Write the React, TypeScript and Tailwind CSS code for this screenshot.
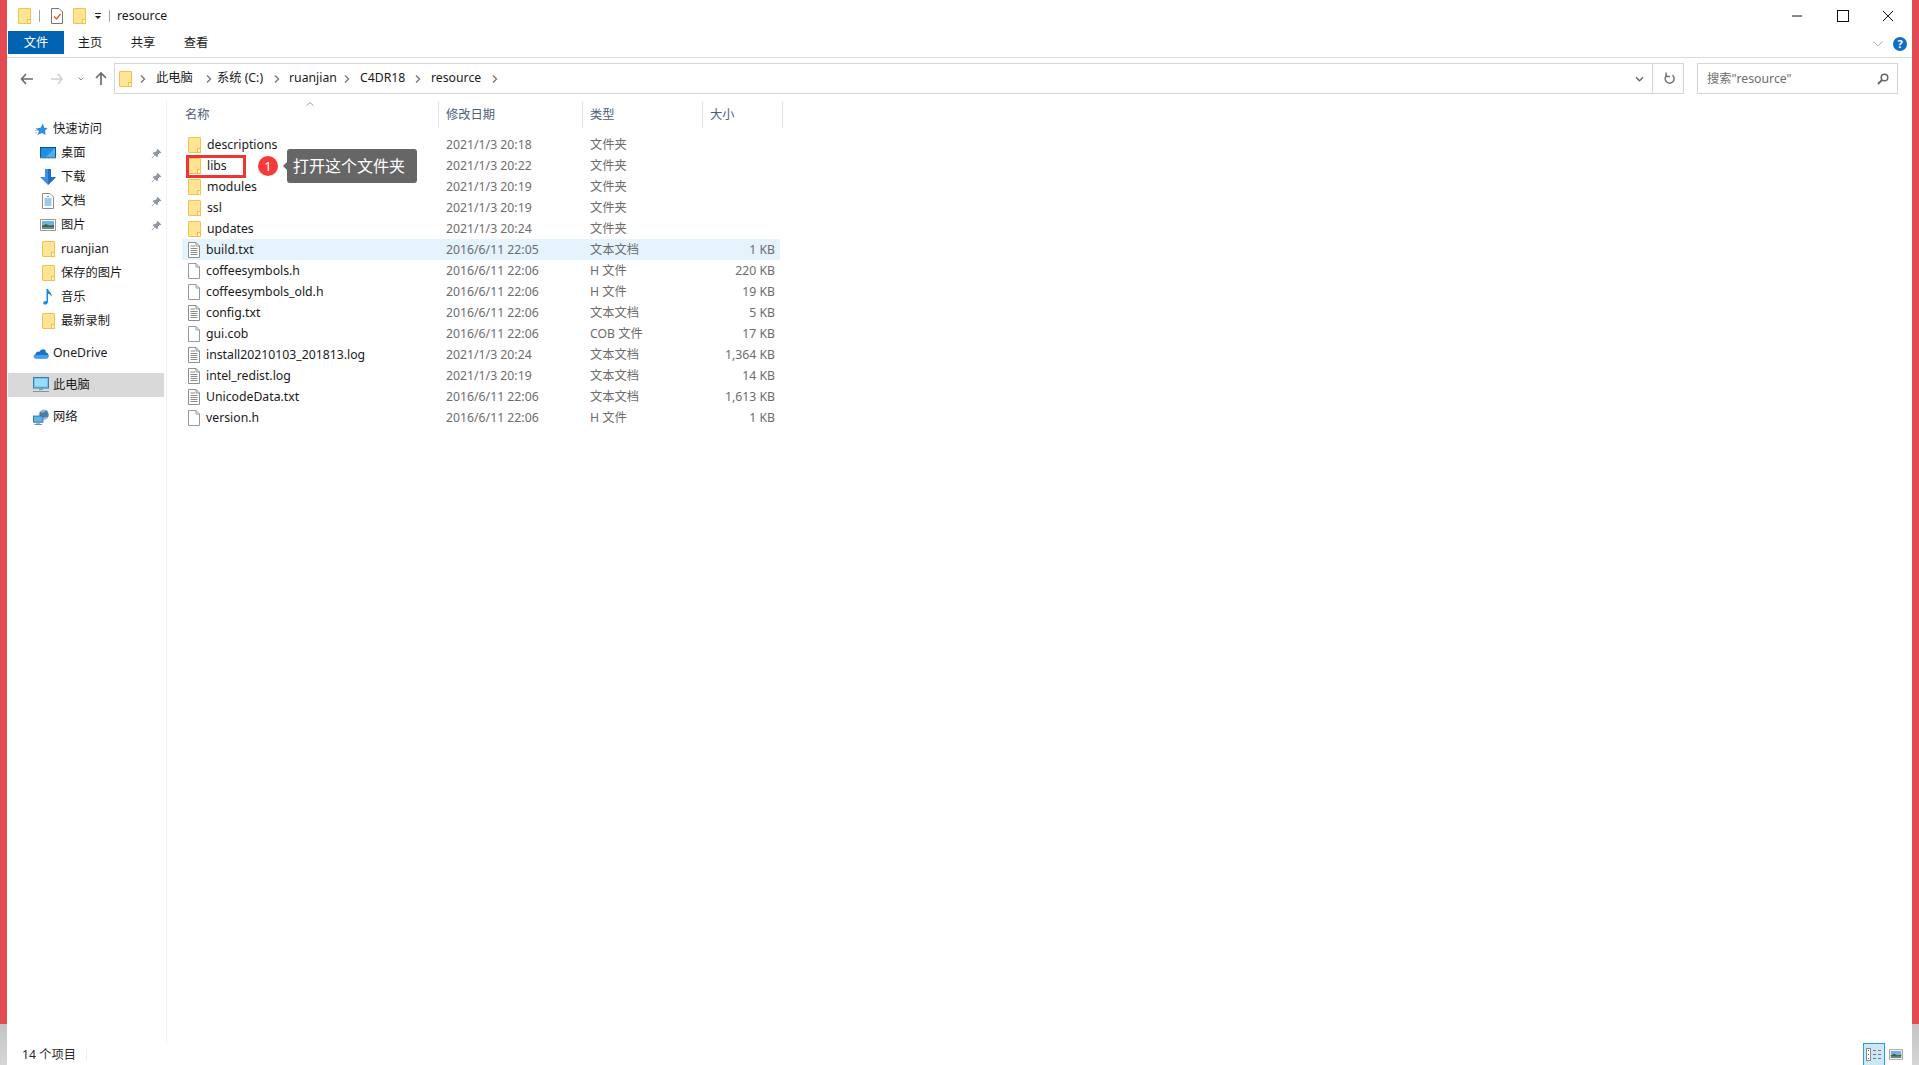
import React from "react";

const FONT = "font-['Noto_Sans','Noto_Sans_CJK_SC',sans-serif]";

function Folder({ className = "" }: { className?: string }) {
  return (
    <svg viewBox="0 0 13 16" className={`w-[13px] h-[16px] shrink-0 ${className}`}>
      <rect x="0.5" y="0.5" width="12" height="15" rx="0.5" fill="#ffe593" stroke="#ecc54f" />
      <rect x="9.5" y="11.5" width="3" height="4" fill="#fff3c4" stroke="#ecc54f" />
    </svg>
  );
}

function DocLines() {
  return (
    <svg viewBox="0 0 12 16" className="w-[12px] h-[16px] shrink-0">
      <path d="M.5.5H8L11.500 4V15.500H.5Z" fill="#fff" stroke="#8e8e8e" />
      <path d="M8 .5V4H11.500" fill="none" stroke="#8e8e8e" />
      <path d="M2.500 4H7M2.500 6.500H9.500M2.500 8.500H9.500M2.500 10.500H9.500M2.500 12.500H9.500" stroke="#8a8a8a" />
    </svg>
  );
}

function DocBlank() {
  return (
    <svg viewBox="0 0 12 16" className="w-[12px] h-[16px] shrink-0">
      <path d="M.5.5H8L11.500 4V15.500H.5Z" fill="#fff" stroke="#9a9a9a" />
      <path d="M8 .5V4H11.500" fill="none" stroke="#9a9a9a" />
    </svg>
  );
}

function Chevron({ className = "" }: { className?: string }) {
  return (
    <svg viewBox="0 0 6 10" className={`w-[6px] h-[10px] shrink-0 ${className}`}>
      <path d="M1 1.500L4.500 5 1 8.500" fill="none" stroke="#7a7a7a" strokeWidth="1.400" />
    </svg>
  );
}

function Star() {
  return (
    <svg viewBox="0 0 14 14" className="w-[13px] h-[13px]">
      <path d="M8.500.5L10 5 13.500 5.500 10.800 8.300 11.500 13 7.500 10.800 2.500 13 4.300 8.500 0.500 5.800 6 5Z" fill="#2f8fe3" />
      <path d="M0 8H3M0 10.500H2" stroke="#9cc9f0" />
    </svg>
  );
}

function Pin() {
  return (
    <svg viewBox="0 0 12 12" className="w-[11px] h-[11px]">
      <path d="M7 .8L11.200 5 10.300 5.800 9.500 5.400 7.300 7.600 7.400 9.600 6.400 10.200 1.800 5.600 2.500 4.600 4.500 4.700 6.700 2.500 6.300 1.700Z" fill="#8c95a0" />
      <path d="M3.800 8.200L.8 11.200" stroke="#8c95a0" />
    </svg>
  );
}

function Desktop() {
  return (
    <svg viewBox="0 0 16 12" className="w-[16px] h-[12px]">
      <rect width="16" height="12" fill="#111d2c" />
      <rect x="0.500" y="0.500" width="15" height="9.500" fill="#1c8fe6" />
      <path d="M15 1L6 10H15Z" fill="#4db1f2" />
      <rect y="10.500" width="16" height="1.500" fill="#a9d6f5" />
    </svg>
  );
}

function Download() {
  return (
    <svg viewBox="0 0 16 16" className="w-[16px] h-[16px]">
      <path d="M5 0H11V8H16L8 16 0 8H5Z" fill="#3d8fe0" />
      <path d="M8 0H11V8H16L8 16Z" fill="#1f6fc4" />
    </svg>
  );
}

function DocBlue() {
  return (
    <svg viewBox="0 0 12 16" className="w-[12px] h-[16px]">
      <path d="M.5.5H8L11.500 4V15.500H.5Z" fill="#fff" stroke="#8e8e8e" />
      <path d="M5 3.500H7M2.500 6H9.500M2.500 8H9.500M2.500 10H9.500M2.500 12H9.500" stroke="#3b93d8" />
    </svg>
  );
}

function Picture({ className = "w-[16px] h-[12px]" }: { className?: string }) {
  return (
    <svg viewBox="0 0 16 12" className={className}>
      <rect x="0.500" y="0.500" width="15" height="11" fill="#fff" stroke="#9a9a9a" />
      <rect x="2" y="2" width="12" height="4" fill="#6fb3e6" />
      <rect x="2" y="6" width="12" height="4" fill="#6a8f78" />
      <path d="M2 7L6 5 10 7 14 6V8H2Z" fill="#3f5f52" />
    </svg>
  );
}

function Music() {
  return (
    <svg viewBox="0 0 10 16" className="w-[10px] h-[16px]">
      <path d="M3.500 0H5C5.400 2.500 9.500 4 8.500 8 8 6 6.500 5 5 4.800V12.500C5 14.500 3.300 15.800 1.800 15.600 .2 15.300-.3 13.800.8 12.700 1.500 12 2.700 11.700 3.500 12Z" fill="#1789e0" />
    </svg>
  );
}

function Cloud() {
  return (
    <svg viewBox="0 0 16 11" className="w-[16px] h-[11px]">
      <path d="M3 10.500C.5 10.500 0 7 2.500 6.200 3 3.500 5.500 3 6.500 4 8 0 13 .8 13 4.500 15.800 4.800 16.500 9 14 10.500Z" fill="#1a73c9" />
      <path d="M3 10.500C1 10.500 0 8.500 1 7H15.500C16 9 15.300 10 14 10.500Z" fill="#3fa0e8" />
    </svg>
  );
}

function Computer() {
  return (
    <svg viewBox="0 0 16 16" className="w-[16px] h-[16px]">
      <rect x="0.500" y="0.500" width="15" height="10.500" fill="#6cc3f2" stroke="#3b7fa8" />
      <rect x="2" y="2" width="12" height="7.500" fill="#9bdcf9" />
      <path d="M6 11.500H10V13H6Z" fill="#7a99ad" />
      <path d="M0 14.500H16" stroke="#7a99ad" />
    </svg>
  );
}

function Network() {
  return (
    <svg viewBox="0 0 18 17" className="w-[17px] h-[16px]">
      <circle cx="11.500" cy="6" r="5.500" fill="#8fbadd" />
      <path d="M8 3C10 5 13 3 14 1 16 3 17 6 15.500 9 13 8 10 9 9 10.500 7 8 6.500 5 8 3Z" fill="#4d7fa6" />
      <rect x="0.500" y="7.500" width="10" height="6.500" fill="#5cb5ea" stroke="#3b6f98" />
      <path d="M3.500 15H7.500M1.500 16.500H9.500" stroke="#6a8ba3" />
    </svg>
  );
}

function Search() {
  return (
    <svg viewBox="0 0 12 12" className="w-[12px] h-[12px]">
      <circle cx="7.500" cy="4.500" r="3.300" fill="none" stroke="#666" strokeWidth="1.500" />
      <path d="M5 7L1 11" stroke="#666" strokeWidth="2" />
    </svg>
  );
}

function Refresh() {
  return (
    <svg viewBox="0 0 12 13" className="ml-[3px] w-[12px] h-[13px]">
      <path d="M8.500 3.200A4.500 4.500 0 1 1 3 3" fill="none" stroke="#777" strokeWidth="1.500" />
      <path d="M2 0.500V4.500H6" fill="none" stroke="#777" strokeWidth="1.500" />
    </svg>
  );
}

function HelpCircle() {
  return (
    <span className="w-[14px] h-[14px] rounded-full bg-[#0f6fc6] text-white text-[11px] font-bold leading-[14px] text-center">?</span>
  );
}

const sidebarPinned = [
  { icon: <Desktop />, label: "桌面", pin: true },
  { icon: <Download />, label: "下载", pin: true },
  { icon: <span className="ml-[2px] flex"><DocBlue /></span>, label: "文档", pin: true },
  { icon: <Picture />, label: "图片", pin: true },
  { icon: <span className="ml-[2px] flex"><Folder /></span>, label: "ruanjian", pin: false },
  { icon: <span className="ml-[2px] flex"><Folder /></span>, label: "保存的图片", pin: false },
  { icon: <span className="ml-[3px] flex"><Music /></span>, label: "音乐", pin: false },
  { icon: <span className="ml-[2px] flex"><Folder /></span>, label: "最新录制", pin: false },
];

const files = [
  { kind: "folder", name: "descriptions", date: "2021/1/3 20:18", type: "文件夹", size: "" },
  { kind: "folder", name: "libs", date: "2021/1/3 20:22", type: "文件夹", size: "" },
  { kind: "folder", name: "modules", date: "2021/1/3 20:19", type: "文件夹", size: "" },
  { kind: "folder", name: "ssl", date: "2021/1/3 20:19", type: "文件夹", size: "" },
  { kind: "folder", name: "updates", date: "2021/1/3 20:24", type: "文件夹", size: "" },
  { kind: "doc", name: "build.txt", date: "2016/6/11 22:05", type: "文本文档", size: "1 KB", selected: true },
  { kind: "blank", name: "coffeesymbols.h", date: "2016/6/11 22:06", type: "H 文件", size: "220 KB" },
  { kind: "blank", name: "coffeesymbols_old.h", date: "2016/6/11 22:06", type: "H 文件", size: "19 KB" },
  { kind: "doc", name: "config.txt", date: "2016/6/11 22:06", type: "文本文档", size: "5 KB" },
  { kind: "blank", name: "gui.cob", date: "2016/6/11 22:06", type: "COB 文件", size: "17 KB" },
  { kind: "doc", name: "install20210103_201813.log", date: "2021/1/3 20:24", type: "文本文档", size: "1,364 KB" },
  { kind: "doc", name: "intel_redist.log", date: "2021/1/3 20:19", type: "文本文档", size: "14 KB" },
  { kind: "doc", name: "UnicodeData.txt", date: "2016/6/11 22:06", type: "文本文档", size: "1,613 KB" },
  { kind: "blank", name: "version.h", date: "2016/6/11 22:06", type: "H 文件", size: "1 KB" },
];

const crumbs = [
  { t: "此电脑", c: "ml-[10px] w-[50px]" },
  { t: "系统 (C:)", c: "ml-[5px] w-[57px]" },
  { t: "ruanjian", c: "ml-[9px] w-[55px]" },
  { t: "C4DR18", c: "ml-[10px] w-[55px]" },
  { t: "resource", c: "ml-[10px] w-[61px]" },
];

function Stripe() {
  return (
    <div className="w-[7px] shrink-0 flex flex-col">
      <div className="flex-1 bg-[#e24b52]" />
      <div className="h-[41px] bg-gradient-to-b from-[#c4c4c4] to-[#d6d6d6]" />
    </div>
  );
}

function SideRow({ icon, label, pin, className = "" }: { icon: React.ReactNode; label: string; pin?: boolean; className?: string }) {
  return (
    <div className={`h-[24px] flex items-center ${className}`}>
      <span className="w-[16px] ml-[33px] flex items-center shrink-0">{icon}</span>
      <span className="ml-[5px]">{label}</span>
      {pin && <span className="ml-auto mr-[4px] flex"><Pin /></span>}
    </div>
  );
}

function SideTop({ icon, label, className = "" }: { icon: React.ReactNode; label: string; className?: string }) {
  return (
    <div className={`h-[24px] flex items-center ${className}`}>
      <span className="w-[18px] ml-[25px] flex items-center justify-center shrink-0">{icon}</span>
      <span className="ml-[3px]">{label}</span>
    </div>
  );
}

export default function App() {
  return (
    <div className={`w-[1919px] h-[1065px] overflow-hidden flex bg-white text-[12.25px] text-[#1a1a1a] ${FONT}`}>
      <Stripe />
      <div className="flex-1 min-w-0 flex flex-col">
        {/* title bar */}
        <div className="h-[31px] flex items-center pl-[11px] pr-[19px] shrink-0">
          <Folder />
          <span className="ml-[8px] w-px h-[12px] bg-[#a0a0a0]" />
          <svg viewBox="0 0 12 16" className="ml-[11px] w-[12px] h-[16px]">
            <path d="M.5.5H8L11.500 4V15.500H.5Z" fill="#fff" stroke="#777" />
            <path d="M3 8.500L5.500 11 9.500 6" fill="none" stroke="#e2592b" strokeWidth="1.400" />
          </svg>
          <Folder className="ml-[10px]" />
          <svg viewBox="0 0 8 8" className="ml-[8px] w-[8px] h-[8px]">
            <path d="M1 1.500H7" stroke="#222" />
            <path d="M1 4H7L4 7Z" fill="#222" />
          </svg>
          <span className="ml-[7px] w-px h-[12px] bg-[#a0a0a0]" />
          <span className="ml-[7px] pt-[2px]">resource</span>
          <svg viewBox="0 0 10 10" className="ml-auto w-[10px] h-[10px]">
            <path d="M0 5H10" stroke="#111" />
          </svg>
          <svg viewBox="0 0 12 12" className="ml-[35px] w-[12px] h-[12px]">
            <rect x="0.500" y="0.500" width="11" height="11" fill="none" stroke="#111" />
          </svg>
          <svg viewBox="0 0 10 10" className="ml-[34px] w-[10px] h-[10px]">
            <path d="M0 0L10 10M10 0L0 10" stroke="#111" />
          </svg>
        </div>
        {/* ribbon tabs */}
        <div className="h-[27px] shrink-0 flex items-start border-b border-[#dadada] pr-[5px] whitespace-nowrap">
          <div className="ml-px w-[56px] h-[23px] pt-[2px] bg-[#0063b1] text-white flex items-center justify-center">文件</div>
          <div className="ml-[14px] w-[24px] h-[23px] pt-[2px] flex items-center justify-center">主页</div>
          <div className="ml-[29px] w-[24px] h-[23px] pt-[2px] flex items-center justify-center">共享</div>
          <div className="ml-[29px] w-[24px] h-[23px] pt-[2px] flex items-center justify-center">查看</div>
          <div className="ml-auto h-[26px] flex items-center">
            <svg viewBox="0 0 10 6" className="w-[10px] h-[6px]">
              <path d="M.5.5L5 5 9.500.5" fill="none" stroke="#b5b5b5" />
            </svg>
            <span className="ml-[10px] flex"><HelpCircle /></span>
          </div>
        </div>
        {/* address row */}
        <div className="h-[42px] shrink-0 flex items-start pt-[5px] pl-[13px] pr-[14px]">
          <div className="h-[31px] flex items-center">
            <svg viewBox="0 0 13 12" className="w-[13px] h-[12px]">
              <path d="M6 1L1.500 6 6 11M1.500 6H13" fill="none" stroke="#6b6b6b" strokeWidth="1.600" />
            </svg>
            <svg viewBox="0 0 12 12" className="ml-[18px] w-[12px] h-[12px]">
              <path d="M7 1L11 6 7 11M11 6H0" fill="none" stroke="#cfcfcf" strokeWidth="1.500" />
            </svg>
            <svg viewBox="0 0 6 4" className="ml-[15px] w-[6px] h-[4px]">
              <path d="M.5.5L3 3 5.500.5" fill="none" stroke="#8a8a8a" />
            </svg>
            <svg viewBox="0 0 12 13" className="ml-[11px] w-[12px] h-[13px]">
              <path d="M1 6L6 1 11 6M6 1V13" fill="none" stroke="#6b6b6b" strokeWidth="1.700" />
            </svg>
          </div>
          <div className="ml-[7px] flex-1 h-[31px] border border-[#d6d6d6] flex items-center pl-[4px]">
            <Folder />
            <Chevron className="ml-[8px]" />
            {crumbs.map((c) => (
              <React.Fragment key={c.t}>
                <span className={`${c.c} whitespace-nowrap`}>{c.t}</span>
                <Chevron />
              </React.Fragment>
            ))}
            <div className="ml-auto h-full w-[31px] flex items-center justify-center pl-[5px]">
              <svg viewBox="0 0 10 6" className="w-[9px] h-[6px]">
                <path d="M1 1L5 5 9 1" fill="none" stroke="#666" strokeWidth="1.500" />
              </svg>
            </div>
            <div className="h-full w-[31px] border-l border-[#d6d6d6] flex items-center justify-center">
              <Refresh />
            </div>
          </div>
          <div className="ml-[13px] w-[201px] h-[31px] border border-[#d6d6d6] flex items-center pl-[9px] pr-[8px] text-[#6d6d6d]">
            <span className="pt-[2px]">搜索"resource"</span>
            <span className="ml-auto flex"><Search /></span>
          </div>
        </div>
        {/* content */}
        <div className="flex-1 min-h-0 flex">
          <div className="w-[160px] shrink-0 border-r border-[#f0f0f0] pt-[17px]">
            <SideTop icon={<Star />} label="快速访问" />
            {sidebarPinned.map((s) => (
              <SideRow key={s.label} icon={s.icon} label={s.label} pin={s.pin} />
            ))}
            <SideTop icon={<Cloud />} label="OneDrive" className="mt-[8px]" />
            <SideTop icon={<Computer />} label="此电脑" className="mt-[8px] ml-px mr-[2px] bg-[#d9d9d9] [&>span:first-child]:ml-[24px]" />
            <SideTop icon={<Network />} label="网络" className="mt-[8px]" />
          </div>
          <div className="flex-1 relative">
            <div className="ml-[15px] w-[601px] h-[27px] mt-px grid grid-cols-[257px_144px_120px_80px] text-[#4c607a] relative">
              <div className="border-r border-[#e5e5e5] pl-[3px] pt-[2px] flex items-center">名称</div>
              <div className="border-r border-[#e5e5e5] pl-[7px] pt-[2px] flex items-center">修改日期</div>
              <div className="border-r border-[#e5e5e5] pl-[7px] pt-[2px] flex items-center">类型</div>
              <div className="border-r border-[#e5e5e5] pl-[7px] pt-[2px] flex items-center">大小</div>
              <svg viewBox="0 0 8 4" className="absolute left-[124px] top-[1px] w-[8px] h-[4px]">
                <path d="M.5 3.500L4 .5 7.500 3.500" fill="none" stroke="#9aa0a6" />
              </svg>
            </div>
            <div className="ml-[15px] w-[598px] mt-[6px]">
              {files.map((f) => (
                <div
                  key={f.name}
                  className={`h-[21px] grid grid-cols-[257px_144px_120px_77px] items-center ${f.selected ? "bg-[#e5f3fd]" : ""}`}
                >
                  <div className="flex items-center pl-[6px] gap-[6px] whitespace-nowrap">
                    {f.kind === "folder" ? <Folder /> : f.kind === "doc" ? <DocLines /> : <DocBlank />}
                    <span className="pt-[2px]">{f.name}</span>
                  </div>
                  <div className="pl-[7px] pt-[2px] text-[#6d6d6d]">{f.date}</div>
                  <div className="pl-[7px] pt-[2px] text-[#6d6d6d]">{f.type}</div>
                  <div className="pr-[5px] pt-[2px] text-right text-[#6d6d6d] whitespace-nowrap">{f.size}</div>
                </div>
              ))}
            </div>
            {/* annotation overlay */}
            <div className="absolute left-[19px] top-[55px] w-[60px] h-[23px] border-[3px] border-[#f03434]" />
            <div className="absolute left-[91px] top-[56px] w-[20px] h-[20px] rounded-full bg-[#f53a3a] text-white text-[13px] leading-[20px] text-center">1</div>
            <div className="absolute left-[120px] top-[49px] w-[130px] h-[34px] rounded-[3px] bg-[#666666] text-white text-[16px] leading-[34px] pl-[6px] whitespace-nowrap">
              打开这个文件夹
              <span className="absolute -left-[4px] top-[13px] w-0 h-0 border-y-[4px] border-y-transparent border-r-[4px] border-r-[#666666]" />
            </div>
          </div>
        </div>
        {/* status bar */}
        <div className="h-[22px] shrink-0 flex items-center pl-[15px] pr-[9px] text-[#2b2b2b]">
          <span className="w-[64px] pt-[2px]">14 个项目</span>
          <span className="w-px h-[11px] bg-[#eeeeee]" />
          <div className="ml-auto h-full flex items-center">
            <div className="w-[22px] h-full bg-[#cce8f7] border border-[#26a0da] border-b-0 flex items-center justify-center">
              <svg viewBox="0 0 16 13" className="w-[16px] h-[13px]">
                <rect x="0.500" y="0.500" width="4" height="12" fill="#fff" stroke="#8a8a8a" />
                <path d="M7 2.500H10M12 2.500H15M7 6.500H10M12 6.500H15M7 10.500H10M12 10.500H15" stroke="#777" />
                <rect x="2" y="2" width="1" height="1" fill="#555" />
                <rect x="2" y="6" width="1" height="1" fill="#555" />
                <rect x="2" y="10" width="1" height="1" fill="#c0392b" />
              </svg>
            </div>
            <span className="ml-[4px] flex"><Picture className="w-[14px] h-[11px]" /></span>
          </div>
        </div>
      </div>
      <Stripe />
    </div>
  );
}
